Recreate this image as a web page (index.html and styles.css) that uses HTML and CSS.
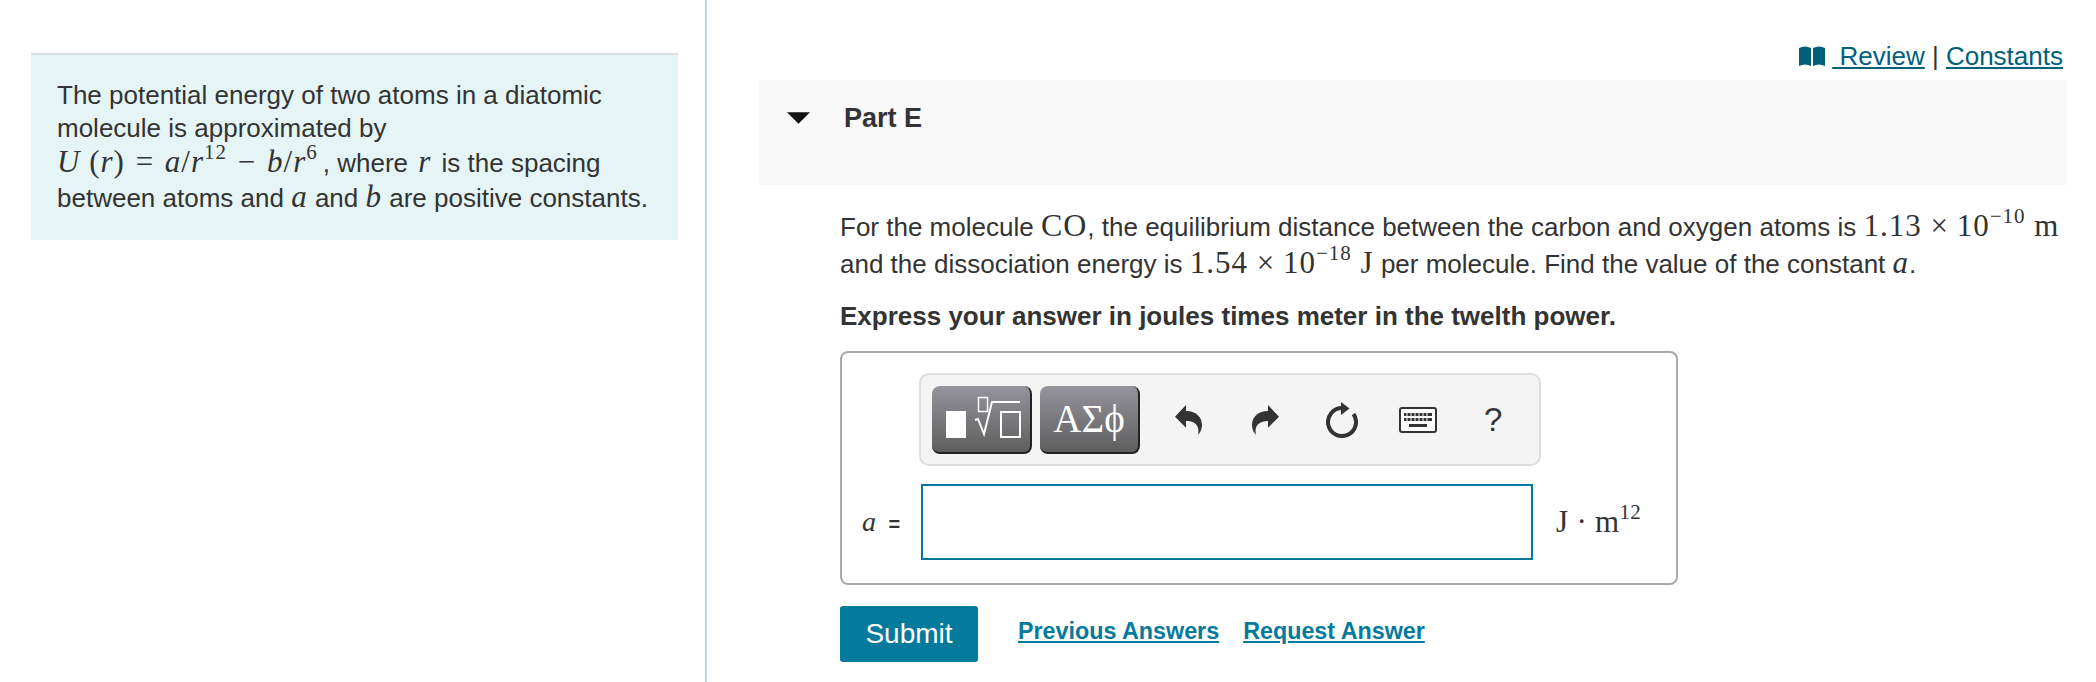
FILE: index.html
```html
<!DOCTYPE html>
<html lang="en">
<head>
<meta charset="utf-8">
<title>Part E</title>
<link rel="stylesheet" href="styles.css">
</head>
<body>
<div class="page">
  <aside class="left">
    <div class="intro">
      <p>The potential energy of two atoms in a diatomic molecule is approximated by<br>
      <span class="m mformula"><i>U</i> (<i>r</i>) <span class="op">=</span> <i>a</i>/<i>r</i><sup>12</sup> <span class="op">&minus;</span> <i>b</i>/<i>r</i><sup>6</sup></span>, where <span class="m mvar"><i>r</i></span> is the spacing between atoms and <span class="m"><i>a</i></span> and <span class="m"><i>b</i></span> are positive constants.</p>
    </div>
  </aside>
  <main class="right">
    <div class="links">
      <svg class="book" viewBox="0 0 26 20" aria-hidden="true"><path d="M0 2c4-2 8-2 12 0v18c-4-2-8-2-12 0zM14 2c4-2 8-2 12 0v18c-4-2-8-2-12 0z"/></svg>
      <a href="#">&nbsp;Review</a> | <a href="#">Constants</a>
    </div>
    <div class="part">
      <svg class="caret" viewBox="0 0 24 12" aria-hidden="true"><path d="M0 0h24L12 12z"/></svg>
      <span class="part-title">Part E</span>
    </div>
    <div class="content">
      <p class="q">For the molecule <span class="m mco">CO</span>, the equilibrium distance between the carbon and oxygen atoms is <span class="m">1.13 <span class="times">&times;</span> 10<sup>&minus;10</sup> m</span> and the dissociation energy is <span class="m">1.54 <span class="times">&times;</span> 10<sup>&minus;18</sup> J</span> per molecule. Find the value of the constant <span class="m"><i>a</i></span>.</p>
      <p class="instr">Express your answer in joules times meter in the twelth power.</p>
      <div class="answer">
        <div class="toolbar">
          <button class="tool" type="button" aria-label="templates">
            <svg viewBox="0 0 100 68" width="100" height="68" aria-hidden="true">
              <rect x="15" y="26" width="20" height="27" fill="#fff"/>
              <rect x="47.500" y="12.500" width="9" height="14" fill="none" stroke="#fff" stroke-width="1.500"/>
              <path d="M44 35l3-1 6 15 8-32h28" fill="none" stroke="#fff" stroke-width="2"/>
              <rect x="70" y="27" width="19" height="25" fill="none" stroke="#fff" stroke-width="2"/>
            </svg>
          </button>
          <button class="tool sym" type="button">&#913;&#931;&#981;</button>
          <svg class="ic ic-undo" viewBox="0 0 27 30" aria-hidden="true"><path d="M0 11.700L11 0v6c11 0 16 7 16 14 0 4-1.500 7-4 10 1.500-6 0-14-12-14v6.700z"/></svg>
          <svg class="ic ic-redo" viewBox="0 0 27 30" aria-hidden="true"><path d="M27 11.700L16 0v6C5 6 0 13 0 20c0 4 1.500 7 4 10-1.500-6 0-14 12-14v6.700z"/></svg>
          <svg class="ic ic-reset" viewBox="0 0 32 36" aria-hidden="true"><path d="M16 6A14 14 0 1 0 27.500 12" fill="none" stroke="#333" stroke-width="4"/><path d="M15 0l8.500 6.500L15 13z"/></svg>
          <svg class="ic ic-keys" viewBox="0 0 38 26" aria-hidden="true"><rect x="1" y="1" width="36" height="24" rx="2" fill="#fff" stroke="#333" stroke-width="2"/><path d="M5 6h28v3H5zM5 11h28v3H5zM10 17h18v3H10z" fill="#333"/><path d="M8 5v10M12 5v10M16 5v10M20 5v10M24 5v10M28 5v10" stroke="#fff" stroke-width="1"/></svg>
          <span class="help">?</span>
        </div>
        <div class="row">
          <span class="lab"><span class="m"><i>a</i></span> <span class="eq">=</span></span>
          <input class="inp" type="text" aria-label="a">
          <span class="m unit">J &middot; m<sup>12</sup></span>
        </div>
      </div>
      <div class="actions">
        <button class="submit" type="button">Submit</button>
        <a class="act" href="#">Previous Answers</a>
        <a class="act" href="#">Request Answer</a>
      </div>
    </div>
  </main>
</div>
</body>
</html>
```
FILE: styles.css
```css
* { box-sizing: border-box; }
html, body { margin: 0; padding: 0; background: #fff; }
body { height: 682px; overflow: hidden; font-family: "Liberation Sans", Arial, sans-serif; color: #333; font-size: 26px; }
p { margin: 0; }
.page { display: flex; height: 682px; }
.left { width: 707px; flex: none; border-right: 2px solid #c5d3e4; padding: 53px 27px 0 31px; }
.intro { background: #e5f5f6; border-top: 2px solid #d9dfe2; height: 187px; padding: 24px 20px 0 26px; line-height: 33px; }
.m { font-family: "Liberation Serif", "Times New Roman", serif; font-size: 31px; letter-spacing: 1px; }
.m sup { font-size: 21px; line-height: 0; vertical-align: 13px; }
.mformula { margin-right: 5px; }
.mvar { margin: 0 3px; }
.op { margin: 0 2px; }
.times { margin: 0 -1px 0 0; }
.right { flex: 1; padding: 0 29px 0 52px; }
.links { height: 80px; padding-top: 40px; text-align: right; line-height: 32px; padding-right: 4px; color: #333; font-size: 26px; }
.links a { color: #005f7a; }
.book { width: 26px; height: 20px; fill: #005f7a; vertical-align: -1px; }
.part { height: 105px; background: #f8f8f8; display: flex; align-items: flex-start; padding: 25px 0 0 28px; }
.caret { width: 23px; height: 12px; fill: #111; margin-top: 7px; }
.part-title { margin-left: 34px; font-weight: 700; font-size: 27px; color: #333; line-height: 26px; }
.content { padding: 22px 0 0 81px; }
.q { line-height: 36px; }
.mco { font-size: 32px; }
.instr { font-weight: 700; margin-top: 16px; line-height: 36px; }
.answer { width: 838px; height: 234px; border: 2px solid #aaa; border-radius: 8px; margin-top: 17px; padding: 20px 0 0 77px; }
.toolbar { width: 622px; height: 93px; background: #f4f4f4; border: 2px solid #ddd; border-radius: 10px; display: flex; align-items: center; padding-left: 11px; }
.tool { width: 100px; height: 68px; padding: 0; border: 0; border-radius: 8px; border-bottom: 2px solid #222; border-right: 2px solid #222; background: linear-gradient(#96949c, #5e5e5e); display: block; color: #fff; flex: none; }
.tool svg { display: block; margin: -1px; }
.sym { margin-left: 8px; font-family: "Liberation Serif", serif; font-size: 39px; }
.ic { fill: #333; flex: none; }
.ic-undo { width: 27px; height: 30px; margin-left: 35px; }
.ic-redo { width: 27px; height: 30px; margin-left: 50px; }
.ic-reset { width: 32px; height: 36px; margin-left: 47px; }
.ic-keys { width: 38px; height: 26px; margin-left: 41px; }
.help { margin-left: 47px; font-size: 33px; color: #333; }
.row { display: flex; align-items: center; height: 76px; margin-top: 18px; margin-left: -77px; padding-left: 20px; }
.lab { width: 59px; flex: none; font-size: 20px; white-space: nowrap; }
.lab .m { font-size: 28px; }
.eq { font-weight: 700; margin-left: 6px; }
.inp { width: 612px; height: 76px; border: 2px solid #047a9c; background: #fff; outline: 0; }
.unit { margin-left: 23px; letter-spacing: 0.300px; }
.actions { display: flex; align-items: center; margin-top: 21px; }
.submit { width: 138px; height: 56px; border: 0; border-radius: 3px; background: #047a9c; color: #fff; font: 28px "Liberation Sans", sans-serif; padding: 0; }
.act { color: #047a9c; font-weight: 700; font-size: 23.300px; margin-left: 40px; position: relative; top: -3px; }
.act + .act { margin-left: 24px; }
```
